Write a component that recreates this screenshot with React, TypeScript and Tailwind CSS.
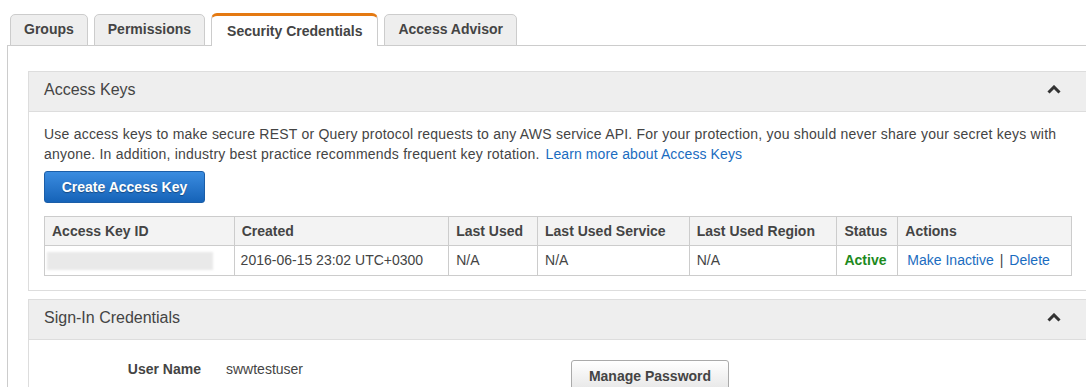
import React from "react";

const font = { fontFamily: '"Liberation Sans", Arial, sans-serif' };

function Chevron() {
  return (
    <svg width="14" height="9" viewBox="0 0 14 9" className="block">
      <path d="M1.5 7.5 L7 2 L12.5 7.5" fill="none" stroke="#333" strokeWidth="3" strokeLinecap="butt" strokeLinejoin="miter" />
    </svg>
  );
}

function PanelHeader({ title }: { title: string }) {
  return (
    <div className="flex h-[41px] items-center justify-between border border-[#dddddd] bg-[#eeeeee] pb-[4px] pl-[15px] pr-[26px]">
      <span className="text-[16px] text-[#444]">{title}</span>
      <Chevron />
    </div>
  );
}

export default function App() {
  const tabs = ["Groups", "Permissions", "Security Credentials", "Access Advisor"];
  const cols = [
    { t: "Access Key ID", w: "w-[189px]" },
    { t: "Created", w: "w-[215px]" },
    { t: "Last Used", w: "w-[89px]" },
    { t: "Last Used Service", w: "w-[152px]" },
    { t: "Last Used Region", w: "w-[148px]" },
    { t: "Status", w: "w-[61px]" },
    { t: "Actions", w: "w-[174px]" },
  ];
  return (
    <div className="h-[387px] w-full overflow-hidden bg-white text-[14px] text-[#444]" style={font}>
      <div className="w-[1120px] pl-[7px] pt-[13px]">
        {/* Tabs */}
        <div className="relative z-10 -mb-px ml-[3px] flex items-end gap-[6px]">
          {tabs.map((t, i) =>
            i === 2 ? (
              <div
                key={t}
                className="flex h-[33px] items-center rounded-t-[6px] border-x border-t-[3px] border-x-[#cccccc] border-t-[#e47911] bg-white px-[15px] font-bold"
              >
                {t}
              </div>
            ) : (
              <div
                key={t}
                className="flex h-[32px] items-center rounded-t-[5px] border border-[#cccccc] bg-[#eeeeee] px-[13px] pb-[1px] font-bold"
              >
                {t}
              </div>
            )
          )}
        </div>
        {/* Content container */}
        <div className="border-l border-t border-[#cccccc] pl-[20px] pt-[25px]">
          {/* Access Keys panel */}
          <div className="w-[1060px]">
            <PanelHeader title="Access Keys" />
            <div className="border-x border-b border-[#dddddd] px-[15px] pb-[14px] pt-[12px]">
              <p className="w-[1030px] leading-[20px] tracking-[0.22px]">
                Use access keys to make secure REST or Query protocol requests to any AWS service API. For your protection, you should never share your secret keys with anyone. In addition, industry best practice recommends frequent key rotation.
                <span className="ml-[6px] tracking-[0.1px] text-[#1a6cc0]">Learn more about Access Keys</span>
              </p>
              <div className="mt-[7px] flex">
                <div
                  className="flex h-[32px] w-[161px] items-center justify-center rounded-[3px] border border-[#1b5ea8] bg-gradient-to-b from-[#3a8ce0] to-[#1563b8] font-bold text-white"
                  style={{ textShadow: "0 1px 1px rgba(0,0,0,0.35)" }}
                >
                  Create Access Key
                </div>
              </div>
              <div className="mt-[13px] w-[1028px] border border-[#cccccc]">
                <div className="flex h-[29px] border-b border-[#cccccc] bg-[#f3f3f3]">
                  {cols.map((c, i) => (
                    <div
                      key={c.t}
                      className={`${c.w} flex items-center px-[7px] font-bold ${i > 0 ? "border-l border-[#cccccc]" : ""}`}
                    >
                      {c.t}
                    </div>
                  ))}
                </div>
                <div className="flex h-[29px]">
                  <div className="flex w-[189px] items-center px-[2px]">
                    <div className="h-[18px] w-[166px] bg-[#e9e9e9] blur-[1px]" />
                  </div>
                  <div className="flex w-[215px] items-center border-l border-[#cccccc] px-[6px]">2016-06-15 23:02 UTC+0300</div>
                  <div className="flex w-[89px] items-center border-l border-[#cccccc] px-[7px]">N/A</div>
                  <div className="flex w-[152px] items-center border-l border-[#cccccc] px-[7px]">N/A</div>
                  <div className="flex w-[148px] items-center border-l border-[#cccccc] px-[7px]">N/A</div>
                  <div className="flex w-[61px] items-center border-l border-[#cccccc] px-[7px] font-bold text-[#1d8a1d]">Active</div>
                  <div className="flex w-[174px] items-center border-l border-[#cccccc] px-[9px] text-[#1a6cc0]">
                    Make Inactive<span className="mx-[6px] text-[#444]">|</span>Delete
                  </div>
                </div>
              </div>
            </div>
          </div>
          {/* Sign-In Credentials panel */}
          <div className="mt-[8px] w-[1060px]">
            <PanelHeader title="Sign-In Credentials" />
            <div className="border-x border-[#dddddd] pt-[20px] pb-[20px]">
              <div className="flex items-start">
                <div className="w-[172px] text-right font-bold leading-[18px]">User Name</div>
                <div className="ml-[25px] w-[345px] leading-[18px]">swwtestuser</div>
                <div className="flex h-[32px] w-[158px] items-center justify-center rounded-[3px] border border-[#aaaaaa] bg-gradient-to-b from-[#ffffff] to-[#e6e6e6] font-bold text-[#444]">
                  Manage Password
                </div>
              </div>
            </div>
          </div>
        </div>
      </div>
    </div>
  );
}
